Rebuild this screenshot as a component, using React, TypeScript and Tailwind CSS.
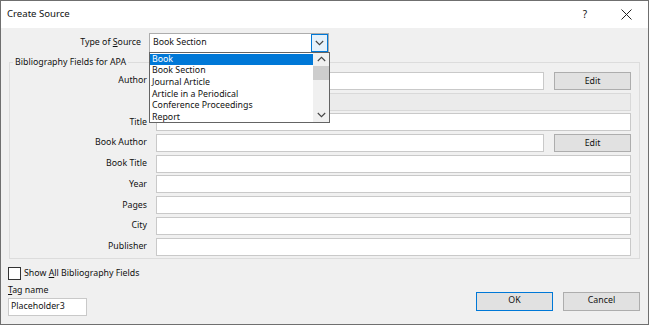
import React from "react";

const font = { fontFamily: '"Noto Sans", "Segoe UI", Arial, sans-serif' };

type Row = { label: string; edit?: boolean; disabled?: boolean };

const rows: Row[] = [
  { label: "Author", edit: true },
  { label: "", disabled: true },
  { label: "Title" },
  { label: "Book Author", edit: true },
  { label: "Book Title" },
  { label: "Year" },
  { label: "Pages" },
  { label: "City" },
  { label: "Publisher" },
];

const sources = [
  "Book",
  "Book Section",
  "Journal Article",
  "Article in a Periodical",
  "Conference Proceedings",
  "Report",
];

function Chevron({ up = false }: { up?: boolean }) {
  return (
    <svg width="9" height="6" viewBox="0 0 9 6" className={up ? "rotate-180" : ""}>
      <path d="M0.8 1 L4.5 4.7 L8.2 1" fill="none" stroke="#444" strokeWidth="1.1" />
    </svg>
  );
}

function FieldRow({ row }: { row: Row }) {
  return (
    <div className="flex h-[18px] items-center">
      <div className="w-[146px] shrink-0 pr-[9px] text-right">{row.label}</div>
      {row.disabled ? (
        <div className="h-[18px] flex-1 border border-[#d9d9d9] bg-[#ebebeb]" />
      ) : (
        <div className="h-[18px] flex-1 border border-[#c9c9c9] bg-white" />
      )}
      {row.edit && (
        <button
          type="button"
          className="ml-[10px] h-[18px] w-[77px] shrink-0 border border-[#adadad] bg-[#e1e1e1] leading-none"
        >
          Edit
        </button>
      )}
    </div>
  );
}

export default function App() {
  return (
    <div
      className="flex h-[325px] w-[649px] flex-col border border-[#6f6f6f] bg-[#f0f0f0] text-[8.8px] text-[#111]"
      style={font}
    >
      <div className="flex h-[27px] shrink-0 items-center bg-white pl-[6px]">
        <span className="text-[9.6px]">Create Source</span>
        <span className="ml-auto mr-[34px] text-[10px]">?</span>
        <svg width="11" height="11" viewBox="0 0 11 11" className="mr-[16px]">
          <path d="M0.5 0.5 L10.5 10.5 M10.5 0.5 L0.5 10.5" stroke="#222" strokeWidth="1" />
        </svg>
      </div>

      <div className="flex flex-1 flex-col px-[7px]">
        <div className="mt-[5px] flex h-[19px] items-center">
          <div className="w-[141px] pr-[8px] text-right">
            Type of <span className="underline">S</span>ource
          </div>
          <div className="relative flex h-[20px] w-[180px] items-center border border-[#adadad] bg-white">
            <span className="pl-[3px]">Book Section</span>
            <div className="ml-auto flex h-full w-[17px] items-center justify-center border border-[#0078d7] bg-[#e5f1fb]">
              <Chevron />
            </div>
            <div className="absolute left-[-1px] top-[18px] z-10 flex h-[71px] w-[181px] border border-[#646464] bg-white">
              <div className="flex flex-1 flex-col pt-px">
                {sources.map((s, i) => (
                  <div
                    key={s}
                    className={`h-[11.7px] pl-[2px] leading-[11.7px] ${
                      i === 0 ? "bg-[#0078d7] text-white" : ""
                    }`}
                  >
                    {s}
                  </div>
                ))}
              </div>
              <div className="flex w-[16px] flex-col items-center bg-[#f0f0f0]">
                <div className="flex h-[13px] items-center">
                  <Chevron up />
                </div>
                <div className="h-[14px] w-full bg-[#cdcdcd]" />
                <div className="mt-auto flex h-[13px] items-center">
                  <Chevron />
                </div>
              </div>
            </div>
          </div>
        </div>

        <fieldset className="mt-[2px] mr-[1px] ml-px border border-[#dcdcdc] pb-[2px] pl-0 pr-[8px]">
          <legend className="ml-[3px] px-[2px] leading-[16px]">Bibliography Fields for APA</legend>
          <div className="mt-[2px] flex flex-col gap-[2.7px]">
            {rows.map((r, i) => (
              <FieldRow key={i} row={r} />
            ))}
          </div>
        </fieldset>

        <div className="mt-[8px] flex h-[14px] items-center gap-[3px]">
          <div className="h-[13px] w-[13px] border border-[#333] bg-white" />
          <span>
            Show <span className="underline">A</span>ll Bibliography Fields
          </span>
        </div>

        <div className="flex items-end">
          <div className="flex flex-col">
            <span className="mt-[2px] leading-[14px]">
              <span className="underline">T</span>ag name
            </span>
            <div className="mt-[1px] flex h-[18px] w-[79px] items-center border border-[#c9c9c9] bg-white pl-[2px]">
              Placeholder3
            </div>
          </div>
          <button
            type="button"
            className="mb-[5px] ml-auto h-[19px] w-[77px] border border-[#0078d7] bg-[#e1e1e1]"
          >
            OK
          </button>
          <button
            type="button"
            className="mb-[5px] ml-[10px] mr-[1px] h-[19px] w-[77px] border border-[#adadad] bg-[#e1e1e1]"
          >
            Cancel
          </button>
        </div>
      </div>
    </div>
  );
}
